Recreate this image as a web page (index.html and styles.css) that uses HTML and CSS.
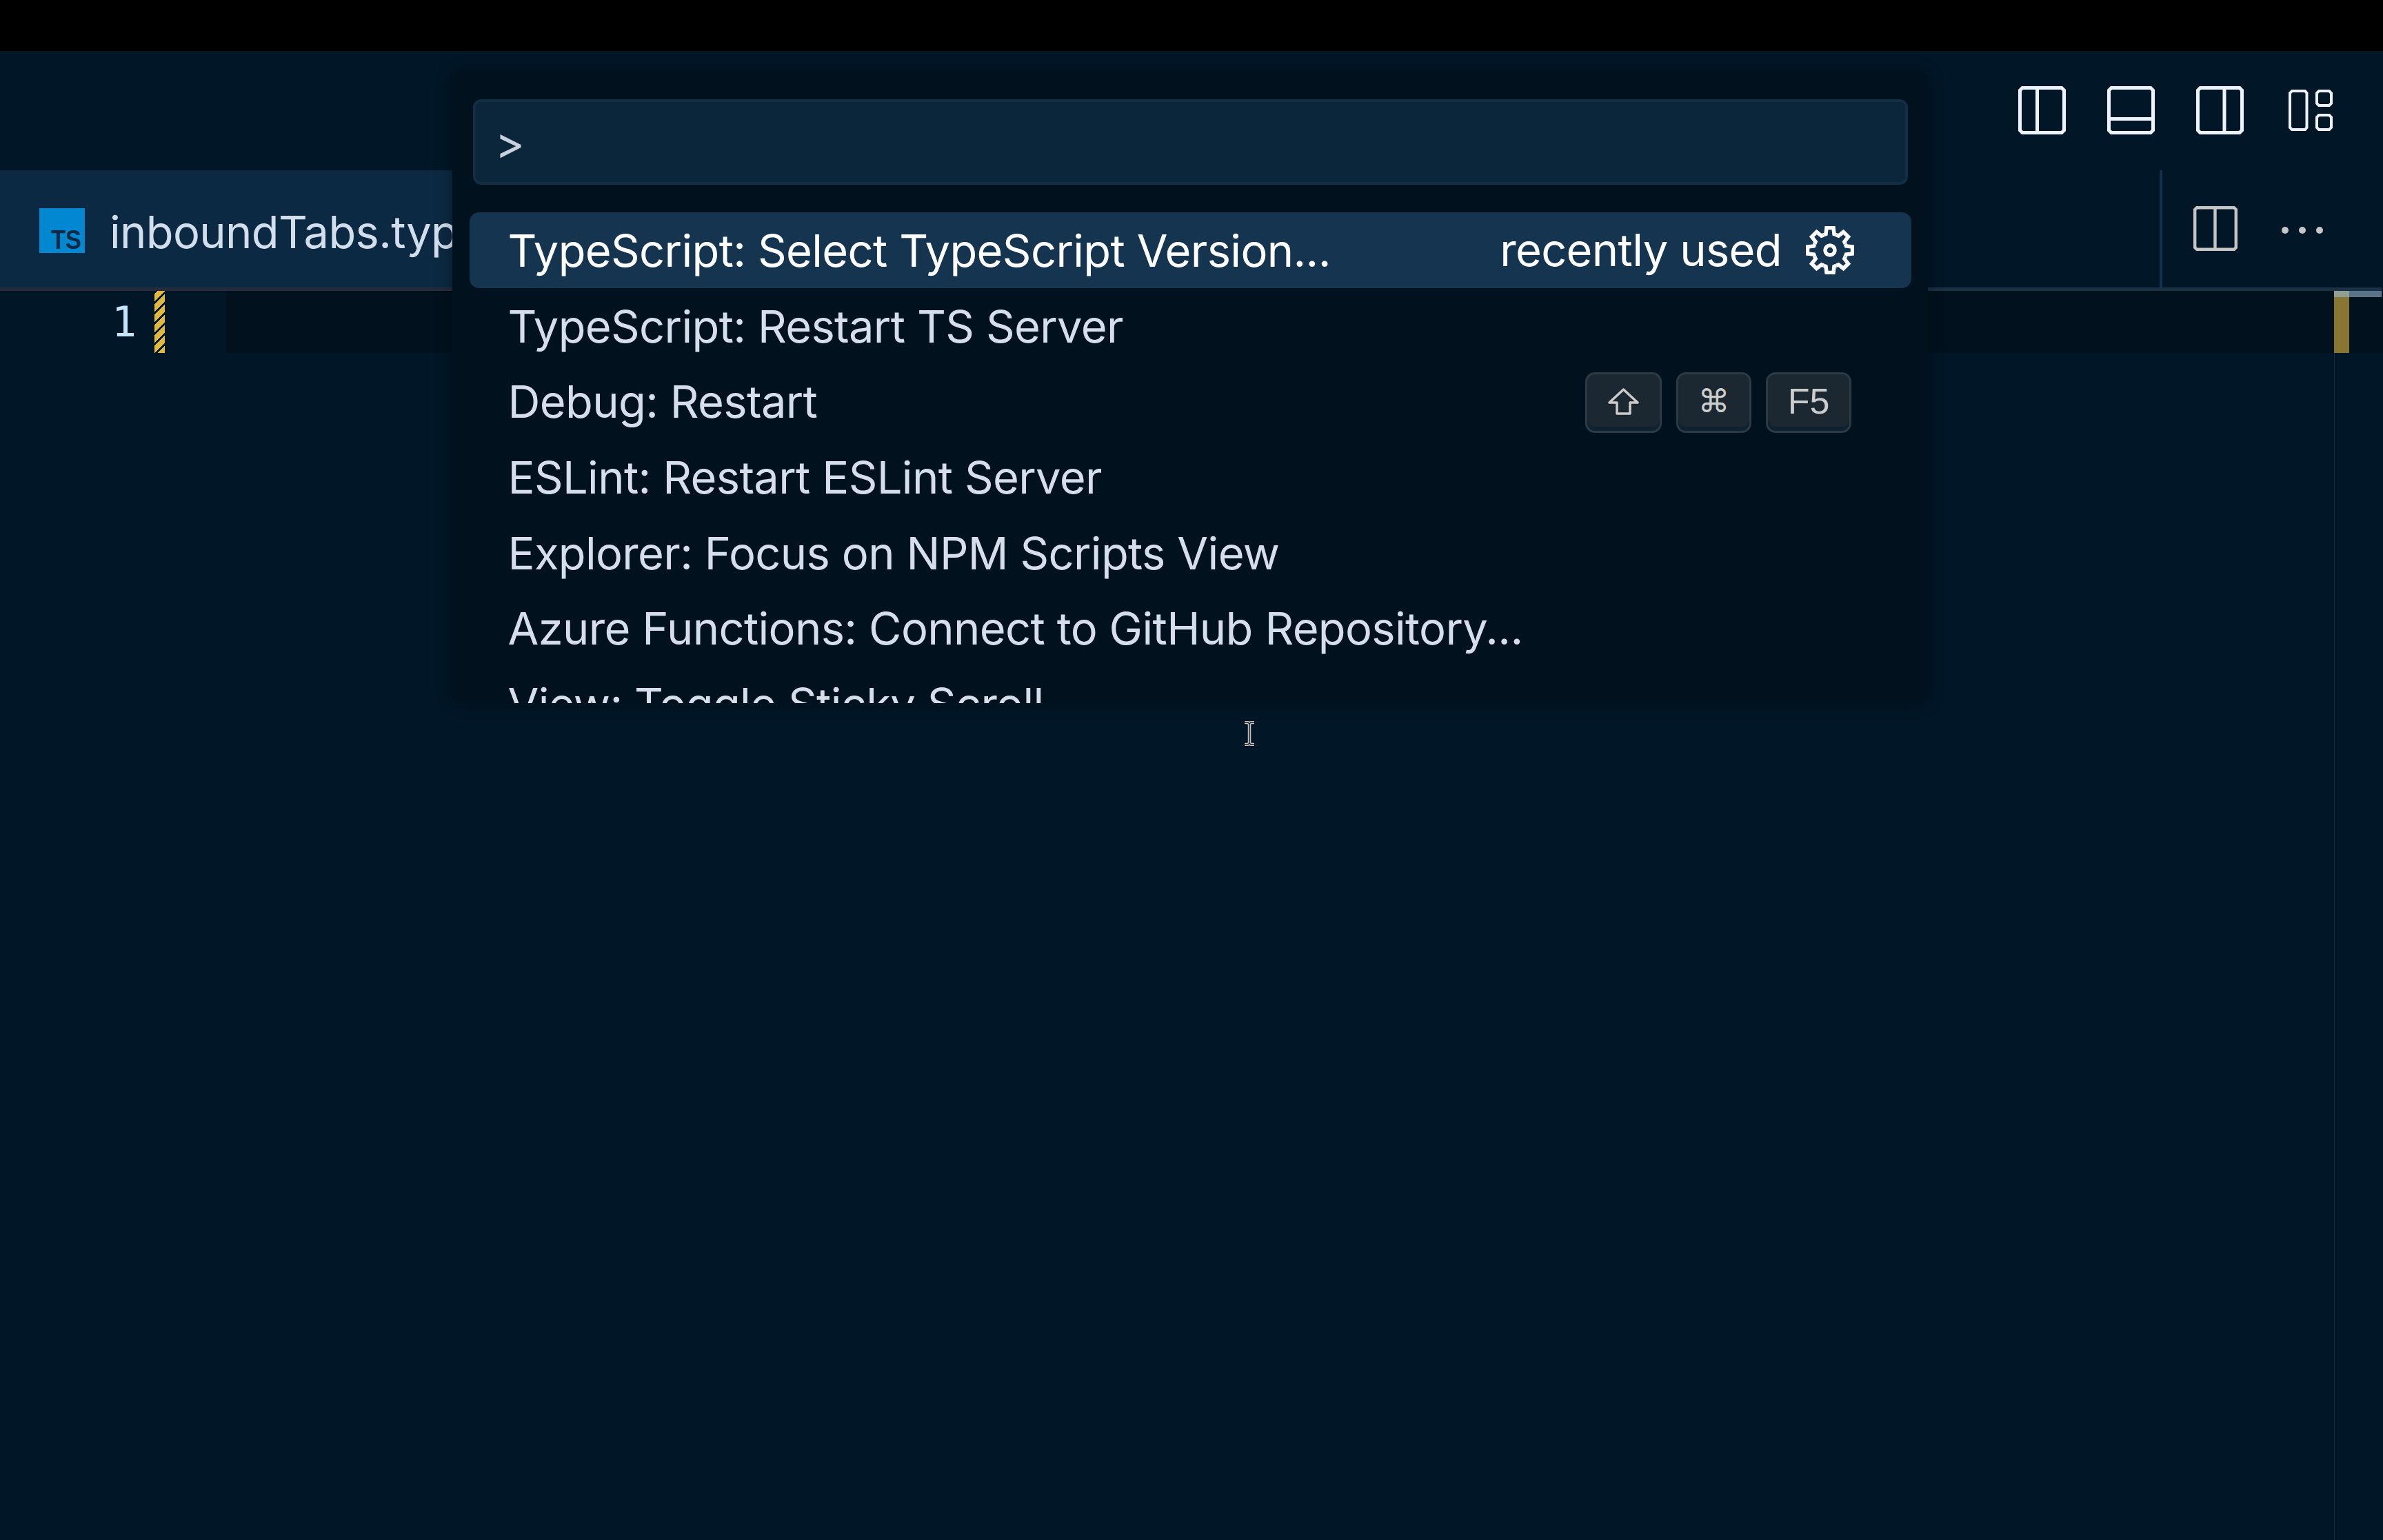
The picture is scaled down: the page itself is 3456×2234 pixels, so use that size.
FILE: index.html
```html
<!DOCTYPE html>
<html lang="en">
<head>
<meta charset="utf-8">
<title>Command Palette</title>
<link rel="stylesheet" href="styles.css">
</head>
<body>
<div class="os-bar"></div>
<div class="title-bar">
  <div class="layout-icons">
    <svg class="ic-big" viewBox="0 0 69 70"><path class="st" d="M6 2.5H63L66.500 6V64L63 67.500H6L2.500 64V6ZM27.500 2.500V67.500"/></svg>
    <svg class="ic-big" viewBox="0 0 69 70"><path class="st" d="M6 2.500H63L66.500 6V64L63 67.500H6L2.500 64V6ZM2.500 47.500H66.500"/></svg>
    <svg class="ic-big" viewBox="0 0 69 70"><path class="st" d="M6 2.500H63L66.500 6V64L63 67.500H6L2.500 64V6ZM41 2.500V67.500"/></svg>
    <svg class="ic-custom" viewBox="0 0 64 60"><path class="st st-thin" d="M5 2H24L26.500 5V55L24 58H5L2 55V5ZM44 2H59L62 5V20L59 23H44L41 20V5ZM44 37H59L62 40V55L59 58H44L41 55V40Z"/></svg>
  </div>
</div>
<div class="tab-bar">
  <div class="tab">
    <span class="ts-icon"><span class="ts-glyph">TS</span></span>
    <span class="tab-name">inboundTabs.types.ts</span>
  </div>
  <div class="tab-actions">
    <svg class="ic-split" viewBox="0 0 64 65"><path class="st-grey" d="M5 2.200H59L61.800 5V60L59 62.800H5L2.200 60V5ZM31.500 2.200V62.800"/></svg>
    <svg class="ic-dots" viewBox="0 0 60 12"><circle cx="5" cy="6" r="5"/><circle cx="30" cy="6" r="5"/><circle cx="55" cy="6" r="5"/></svg>
  </div>
</div>
<div class="editor">
  <div class="line">
    <span class="line-no">1</span>
    <span class="dirty"></span>
    <span class="line-highlight"></span>
  </div>
  <div class="ruler-line"></div>
  <div class="ruler-mark"></div>
  <div class="ruler-slider"></div>
</div>

<div class="palette">
  <div class="input">&gt;</div>
  <ul class="list">
    <li class="row selected">
      <span class="label">TypeScript: Select TypeScript Version...</span>
      <span class="used">recently used</span>
      <svg class="gear" viewBox="0 0 70 70">
        <g class="gear-st">
          <path id="tooth" d="M25.820 12.830L29 11.500L30 2.500H40L41 11.500L44.180 12.830"/>
          <use href="#tooth" transform="rotate(45 35 35)"/>
          <use href="#tooth" transform="rotate(90 35 35)"/>
          <use href="#tooth" transform="rotate(135 35 35)"/>
          <use href="#tooth" transform="rotate(180 35 35)"/>
          <use href="#tooth" transform="rotate(225 35 35)"/>
          <use href="#tooth" transform="rotate(270 35 35)"/>
          <use href="#tooth" transform="rotate(315 35 35)"/>
          <circle cx="35" cy="35" r="7"/>
        </g>
      </svg>
    </li>
    <li class="row"><span class="label">TypeScript: Restart TS Server</span></li>
    <li class="row">
      <span class="label">Debug: Restart</span>
      <span class="keys">
        <kbd class="key key-shift"><svg class="shift" viewBox="0 0 45 39"><path d="M22.500 2L43 21H32V37H13V21H2Z"/></svg></kbd>
        <kbd class="key key-cmd">⌘</kbd>
        <kbd class="key key-f5">F5</kbd>
      </span>
    </li>
    <li class="row"><span class="label">ESLint: Restart ESLint Server</span></li>
    <li class="row"><span class="label">Explorer: Focus on NPM Scripts View</span></li>
    <li class="row"><span class="label">Azure Functions: Connect to GitHub Repository...</span></li>
    <li class="row"><span class="label">View: Toggle Sticky Scroll</span></li>
  </ul>
</div>

<svg class="cursor" viewBox="0 0 18 36"><path class="cursor-edge" d="M2 2H7L9 4L11 2H16M9 4V32M2 34H7L9 32L11 34H16"/><path class="cursor-core" d="M2 2H7L9 4L11 2H16M9 4V32M2 34H7L9 32L11 34H16"/></svg>
</body>
</html>
```
FILE: styles.css
```css
* { box-sizing: border-box; }
html, body { margin: 0; padding: 0; }
body {
  width: 3456px;
  height: 2234px;
  overflow: hidden;
  position: relative;
  background: #011627;
  font-family: "Inter", "Liberation Sans", sans-serif;
  font-size: 65px;
  letter-spacing: -0.65px;
  color: #d6deeb;
  display: flex;
  flex-direction: column;
}
.os-bar { height: 74px; background: #000; flex: none; }
.title-bar {
  height: 173px;
  flex: none;
  display: flex;
  justify-content: flex-end;
  align-items: flex-start;
  padding: 51px 72px 0 0;
}
.layout-icons { display: flex; align-items: center; gap: 60px; transform: translateX(-1px); }
.layout-icons .ic-custom { margin-left: 5px; }
.ic-big { width: 69px; height: 70px; display: block; }
.ic-custom { width: 64px; height: 60px; display: block; }
.st { fill: none; stroke: #edf2ff; stroke-width: 5; }
.st-thin { stroke-width: 4; }
.st-grey { fill: none; stroke: #c5c5c5; stroke-width: 4.4; }
.tab-bar {
  height: 175px;
  flex: none;
  display: flex;
  justify-content: space-between;
  border-bottom: 5px solid #1a3045;
  position: relative;
  width: 3454px;
}
.tab {
  width: 800px;
  height: 175px;
  margin-bottom: -5px;
  background: #0b2942;
  border-bottom: 5px solid #272b3b;
  display: flex;
  align-items: center;
  padding: 5px 0 0 57px;
  gap: 36px;
  overflow: hidden;
  white-space: nowrap;
  flex: none;
}
.ts-icon {
  width: 66px;
  height: 65px;
  flex: none;
  background: #0288d1;
  color: #0b2942;
  font-family: "Liberation Sans", sans-serif;
  font-weight: 700;
  font-size: 39px;
  letter-spacing: 0;
  line-height: 39px;
  display: flex;
  justify-content: flex-end;
  align-items: flex-end;
  padding-right: 5px;
}
.ts-glyph { display: block; transform: scaleX(.88); transform-origin: right bottom; }
.tab-name { color: #d2deec; padding-top: 3px; }
.tab-actions {
  width: 322px;
  height: 170px;
  flex: none;
  border-left: 4px solid #16304a;
  display: flex;
  align-items: flex-start;
  padding: 52px 0 0 45px;
  gap: 64px;
}
.ic-split { width: 64px; height: 65px; display: block; }
.ic-dots { width: 60px; height: 12px; display: block; fill: #c5c5c5; margin-top: 29px; }
.editor { flex: 1; position: relative; width: 3454px; }
.line { height: 90px; display: flex; align-items: stretch; }
.line-no {
  width: 224px;
  padding-right: 26px;
  text-align: right;
  font-family: "DejaVu Sans Mono", monospace;
  font-size: 60px;
  letter-spacing: 0;
  line-height: 90px;
  color: #c5e4fd;
  flex: none;
}
.dirty {
  width: 15px;
  flex: none;
  background: repeating-linear-gradient(-45deg, #e2b93d 0 7.5px, transparent 7.5px 10.6px);
}
.line-highlight { flex: none; width: 3215px; margin-left: 89px; background: #01111d; }
.ruler-line { position: absolute; left: 3385px; top: 0; bottom: 0; width: 1px; background: #0f2a40; }
.ruler-mark { position: absolute; left: 3385px; top: 0; width: 22px; height: 90px; background: #8a7633; }
.ruler-slider { position: absolute; left: 3385px; top: 0; width: 69px; height: 9px; background: rgba(149, 183, 208, .6); }
.palette {
  position: absolute;
  left: 656px;
  top: 104px;
  width: 2140px;
  height: 916px;
  background: #01111d;
  border-radius: 14px;
  box-shadow: 0 0 24px rgba(0, 0, 0, .3);
  overflow: hidden;
  padding: 40px 24px 0 25px;
}
.input {
  height: 124px;
  margin: 0 5px 0 5px;
  background: #0b253a;
  border: 4px solid #122e44;
  border-radius: 12px;
  padding-left: 28px;
  line-height: 120px;
  color: #c9d1dc;
}
.list { list-style: none; margin: 40px 0 0; padding: 0; }
.row {
  height: 109.7px;
  display: flex;
  align-items: center;
  padding: 0 84px 0 55.500px;
  border-radius: 14px;
  white-space: nowrap;
}
.label { flex: 1; padding-top: 1px; }
.selected { background: #14344f; color: #fff; }
.used { margin-right: 35px; }
.gear { width: 70px; height: 70px; display: block; margin-right: -1px; }
.gear-st { fill: none; stroke: #fff; stroke-width: 5.5; stroke-linejoin: miter; }
.keys { display: flex; gap: 21px; padding-top: 3px; margin-right: 3px; }
.key {
  height: 88px;
  display: flex;
  align-items: center;
  justify-content: center;
  background: #1b2832;
  border: 3.5px solid #2e3a43;
  border-radius: 14px;
  box-shadow: inset 0 -6px 0 #0f2231;
  color: #cccccc;
  font-family: "Liberation Sans", sans-serif;
  font-size: 52px;
  letter-spacing: 0;
  font-weight: 400;
  padding-bottom: 3px;
}
.key-shift { width: 111px; }
.key-cmd { width: 109px; font-family: "DejaVu Sans", sans-serif; font-size: 46px; }
.key-f5 { width: 124px; }
.shift { width: 45px; height: 39px; display: block; fill: none; stroke: #cccccc; stroke-width: 3.500; stroke-linejoin: round; }
.cursor { position: absolute; left: 1803px; top: 1046px; width: 18px; height: 36px; fill: none; }
.cursor-edge { stroke: #c4c4c4; stroke-width: 4.5; }
.cursor-core { stroke: #222; stroke-width: 1.5; }
```
